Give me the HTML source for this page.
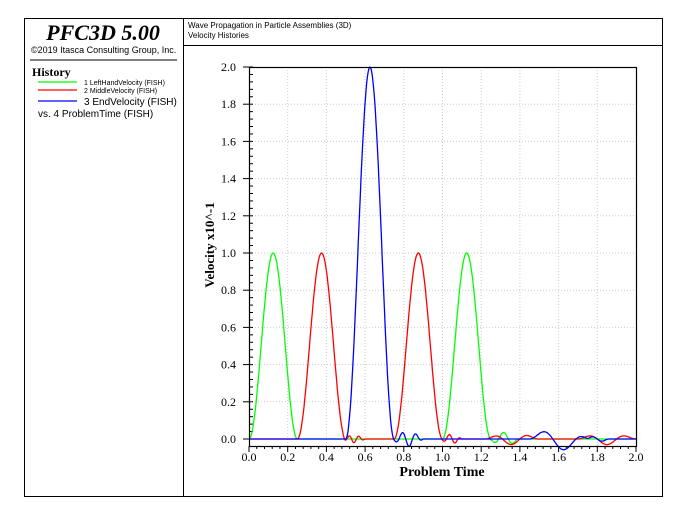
<!DOCTYPE html>
<html><head><meta charset="utf-8"><style>
body{margin:0;width:686px;height:508px;background:#fff;overflow:hidden;font-family:"Liberation Sans",sans-serif}
</style></head><body>
<svg width="686" height="508" xmlns="http://www.w3.org/2000/svg" id="s">
<rect x="24.5" y="18.5" width="638" height="478" fill="none" stroke="#000"/>
<line x1="183.5" y1="18" x2="183.5" y2="496" stroke="#000"/>
<line x1="183" y1="45.5" x2="662" y2="45.5" stroke="#000"/>
<text x="103" y="40" font-family="Liberation Serif" font-style="italic" font-weight="bold" font-size="22" text-anchor="middle">PFC3D 5.00</text>
<text x="31" y="53" font-size="9">©2019 Itasca Consulting Group, Inc.</text>
<line x1="30" y1="60" x2="177" y2="60" stroke="#000" stroke-width="1"/>
<text x="32" y="76" font-family="Liberation Serif" font-weight="bold" font-size="12">History</text>
<line x1="38" y1="82" x2="77" y2="82" stroke="#0f0" stroke-width="1.3"/>
<line x1="38" y1="90" x2="77" y2="90" stroke="#f00" stroke-width="1.3"/>
<line x1="38" y1="101" x2="77" y2="101" stroke="#00f" stroke-width="1.3"/>
<text x="84" y="85" font-size="7">1 LeftHandVelocity (FISH)</text>
<text x="84" y="93" font-size="7">2 MiddleVelocity (FISH)</text>
<text x="84" y="105" font-size="10">3 EndVelocity (FISH)</text>
<text x="38" y="117" font-size="10">vs. 4 ProblemTime (FISH)</text>
<text x="188" y="28" font-size="8">Wave Propagation in Particle Assemblies (3D)</text>
<text x="188" y="38" font-size="8">Velocity Histories</text>
<g id="grid" stroke="#ccc" stroke-dasharray="1,2" stroke-width="1"></g>
<g id="axes"></g>
<g id="curves" fill="none" stroke-width="1.3"></g>
<rect x="249.5" y="67.5" width="387" height="379" fill="none" stroke="#000" stroke-width="1.2"/>
<text x="442" y="476" font-family="Liberation Serif" font-weight="bold" font-size="14" text-anchor="middle">Problem Time</text>
<text transform="translate(214,245) rotate(-90)" font-family="Liberation Serif" font-weight="bold" font-size="13" text-anchor="middle">Velocity x10^-1</text>
</svg>
<script>
var NS="http://www.w3.org/2000/svg";
function el(p,t,a,txt){var e=document.createElementNS(NS,t);for(var k in a)e.setAttribute(k,a[k]);if(txt)e.textContent=txt;document.getElementById(p).appendChild(e);}
function X(t){return 249+t*193.5}function Y(v){return 439-v*186}
for(var i=0;i<=10;i++){var v=i*0.2,y=Y(v);
 if(i>0&&i<10)el("grid","line",{x1:249,x2:636,y1:y,y2:y});
 el("axes","line",{x1:243,x2:253,y1:y,y2:y,stroke:"#000"});
 el("axes","text",{x:236,y:y+4,"font-family":"Liberation Serif","font-size":"12","text-anchor":"end"},v.toFixed(1));
 if(i<10)for(var j=1;j<5;j++){var yy=Y(v+j*0.04);el("axes","line",{x1:249,x2:253,y1:yy,y2:yy,stroke:"#000"});}
 var x=X(v);
 if(i>0&&i<10)el("grid","line",{x1:x,x2:x,y1:67,y2:446});
 el("axes","line",{x1:x,x2:x,y1:446,y2:452,stroke:"#000"});
 el("axes","text",{x:x,y:461,"font-family":"Liberation Serif","font-size":"12","text-anchor":"middle"},v.toFixed(1));
 if(i<10)for(var j=1;j<5;j++){var xx=X(v+j*0.04);el("axes","line",{x1:xx,x2:xx,y1:446,y2:449,stroke:"#000"});}
}
el("grid","line",{x1:249,x2:636,y1:439,y2:439,stroke:"#000","stroke-dasharray":"none"});
function pulse(t,c,a){var d=t-c;if(Math.abs(d)>0.125)return 0;return a*Math.pow(Math.cos(d/0.125*Math.PI/2),2);}
function path(f,col){var d="";for(var t=0;t<=2.0001;t+=0.004){d+=(t==0?"M":"L")+X(t).toFixed(1)+","+Y(f(t)).toFixed(1);}el("curves","path",{d:d,stroke:col});}
function wig(t,s,e,a,p){if(t<s||t>e)return 0;return a*Math.sin((t-s)/p*2*Math.PI)*Math.sin((t-s)/(e-s)*Math.PI);}
path(function(t){return pulse(t,0.125,1)+pulse(t,1.125,1)+wig(t,1.24,1.4,-0.035,0.1)},"#0f0");
path(function(t){return pulse(t,0.375,1)+pulse(t,0.875,1)+wig(t,0.48,0.6,-0.02,0.05)+wig(t,0.99,1.1,-0.025,0.06)+wig(t,1.22,1.5,0.03,0.18)+wig(t,1.7,2.0,0.03,0.2)},"#f00");
path(function(t){return pulse(t,0.625,2)+wig(t,0.74,0.9,-0.04,0.07)+wig(t,1.45,1.75,0.06,0.24)+wig(t,1.74,1.86,0.015,0.12)},"#00f");
</script>
</body></html>
